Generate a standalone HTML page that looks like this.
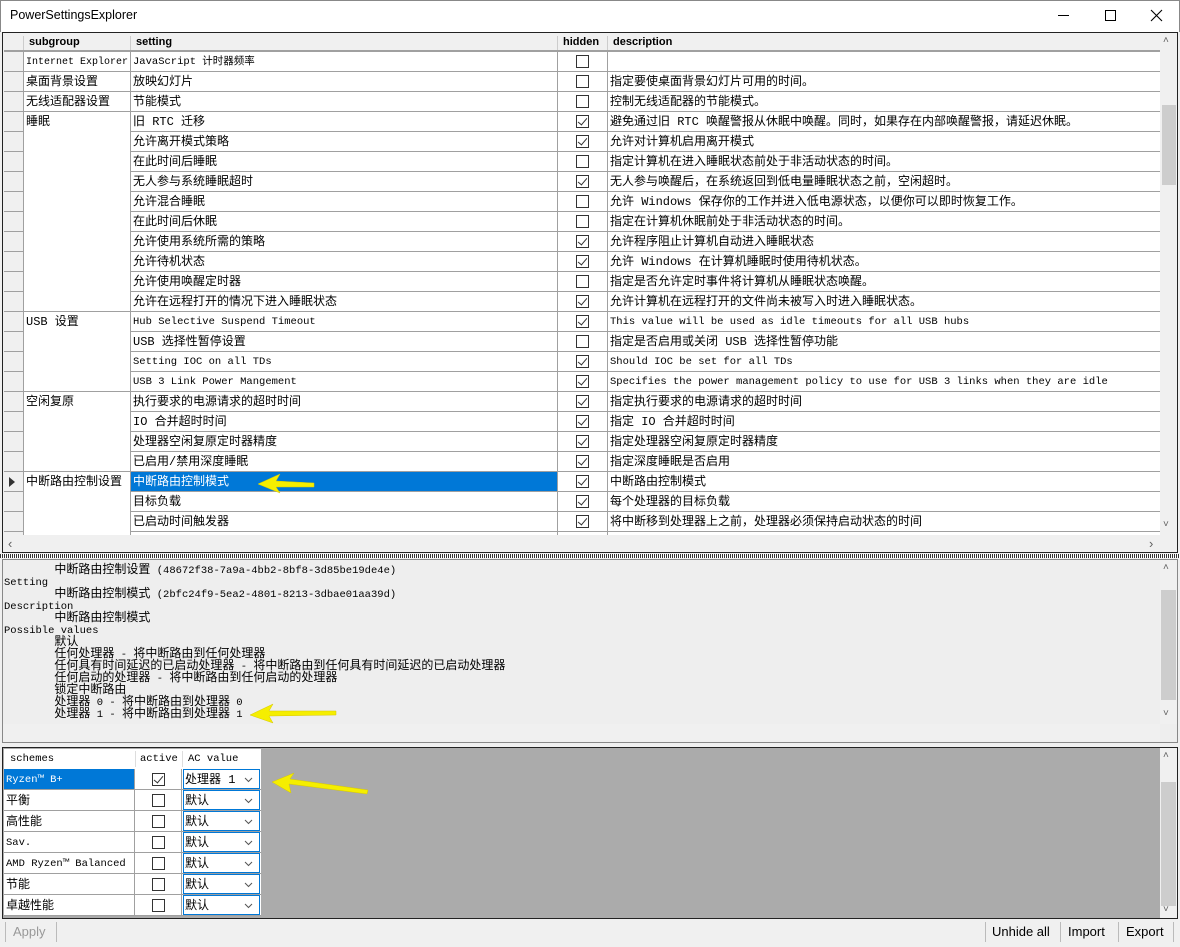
<!DOCTYPE html>
<html><head><meta charset="utf-8">
<style>
*{box-sizing:border-box;margin:0;padding:0}
body{width:1180px;height:947px;background:#f0f0f0;position:relative;overflow:hidden;font-family:"Liberation Sans","Noto Sans CJK SC",sans-serif;font-size:12px;color:#000}
.a{position:absolute}
.c{position:absolute;white-space:nowrap;overflow:hidden;line-height:19px;padding-top:1px;padding-left:2px;font-family:"Liberation Mono","Noto Sans CJK SC",monospace;font-size:12px}
.m{font-size:10.5px}
.m2{font-size:10px}
.cb{position:absolute;width:13px;height:13px;border:1px solid #333;background:#fff}
.ck::after{content:"";position:absolute;left:3px;top:0px;width:4px;height:8px;border:solid #333;border-width:0 1.3px 1.3px 0;transform:rotate(40deg)}
.hd{position:absolute;font-weight:bold;font-size:11px;line-height:19px;padding-left:5px}
pre{font-family:"Liberation Mono","Noto Sans CJK SC",monospace;font-size:10.5px;line-height:12px}
pre b{font-weight:normal;font-size:12px;line-height:0}
</style></head><body>
<div class="a" style="left:0;top:0;width:1180px;height:32px;background:#fff;border:1px solid #888;border-bottom:none"></div>
<div class="a" style="left:10px;top:8px;font-size:12.5px">PowerSettingsExplorer</div>
<div class="a" style="left:1058px;top:15px;width:11px;height:1px;background:#000"></div>
<div class="a" style="left:1105px;top:10px;width:11px;height:11px;border:1px solid #000"></div>
<svg class="a" style="left:1150px;top:9px" width="13" height="13"><path d="M1 1L12 12M12 1L1 12" stroke="#000" stroke-width="1.1"/></svg>
<div class="a" style="left:2px;top:32px;width:1176px;height:521px;border:1px solid #222;background:#f0f0f0"></div>
<div class="a" id="g" style="left:4px;top:33px;width:1156px;height:502px;overflow:hidden;background:#fff"></div>
<div class="a" style="left:1160px;top:33px;width:17px;height:502px;background:#f0f0f0"></div>
<div class="a" style="left:1162px;top:105px;width:14px;height:80px;background:#cdcdcd"></div>
<div class="a" style="left:1163px;top:35px;font-size:10px;color:#606060">&#x2C4;</div>
<div class="a" style="left:1163px;top:519px;font-size:10px;color:#606060">&#x2C5;</div>
<div class="a" style="left:4px;top:535px;width:1156px;height:17px;background:#f0f0f0"></div>
<div class="a" style="left:8px;top:536px;font-size:13px;color:#606060">&lsaquo;</div>
<div class="a" style="left:1149px;top:536px;font-size:13px;color:#606060">&rsaquo;</div>
<div class="a" style="left:0;top:554px;width:1180px;height:4px;background:repeating-linear-gradient(90deg,#333 0 1px,#fff 1px 2px)"></div>
<div class="a" style="left:2px;top:559px;width:1176px;height:184px;border:1px solid #888;background:#eee"></div>
<div class="a" style="left:1160px;top:560px;width:17px;height:164px;background:#f0f0f0"></div>
<div class="a" style="left:1161px;top:590px;width:15px;height:110px;background:#cdcdcd"></div>
<div class="a" style="left:1163px;top:562px;font-size:10px;color:#606060">&#x2C4;</div>
<div class="a" style="left:1163px;top:708px;font-size:10px;color:#606060">&#x2C5;</div>
<div class="a" style="left:3px;top:724px;width:1157px;height:18px;background:#f0f0f0"></div>
<pre class="a" style="left:4px;top:565px">        <b>中断路由控制设置</b> (48672f38-7a9a-4bb2-8bf8-3d85be19de4e)
Setting
        <b>中断路由控制模式</b> (2bfc24f9-5ea2-4801-8213-3dbae01aa39d)
Description
        <b>中断路由控制模式</b>
Possible values
        <b>默认</b>
        <b>任何处理器</b> - <b>将中断路由到任何处理器</b>
        <b>任何具有时间延迟的已启动处理器</b> - <b>将中断路由到任何具有时间延迟的已启动处理器</b>
        <b>任何启动的处理器</b> - <b>将中断路由到任何启动的处理器</b>
        <b>锁定中断路由</b>
        <b>处理器</b> 0 - <b>将中断路由到处理器</b> 0
        <b>处理器</b> 1 - <b>将中断路由到处理器</b> 1</pre>
<div class="a" style="left:2px;top:747px;width:1176px;height:172px;border:1px solid #222;background:#ababab"></div>
<div class="a" style="left:1160px;top:748px;width:17px;height:170px;background:#f0f0f0"></div>
<div class="a" style="left:1161px;top:782px;width:15px;height:124px;background:#cdcdcd"></div>
<div class="a" style="left:1163px;top:750px;font-size:10px;color:#606060">&#x2C4;</div>
<div class="a" style="left:1163px;top:904px;font-size:10px;color:#606060">&#x2C5;</div>
<div id="b"></div>
<div class="a" style="left:5px;top:922px;width:1px;height:20px;background:#bbb"></div>
<div class="a" style="left:13px;top:924px;font-size:13px;color:#999">Apply</div>
<div class="a" style="left:56px;top:922px;width:1px;height:20px;background:#bbb"></div>
<div class="a" style="left:985px;top:922px;width:1px;height:20px;background:#bbb"></div>
<div class="a" style="left:992px;top:924px;font-size:13px">Unhide all</div>
<div class="a" style="left:1060px;top:922px;width:1px;height:20px;background:#bbb"></div>
<div class="a" style="left:1068px;top:924px;font-size:13px">Import</div>
<div class="a" style="left:1118px;top:922px;width:1px;height:20px;background:#bbb"></div>
<div class="a" style="left:1126px;top:924px;font-size:13px">Export</div>
<div class="a" style="left:1173px;top:922px;width:1px;height:20px;background:#bbb"></div>
<svg class="a" style="left:0;top:0" width="1180" height="947">
<g fill="#f5ee00" stroke="#d8c800" stroke-width="0.5">
<path d="M258 484L280 474L276 481L314 483L314 487L276 487L280 493Z"/>
<path d="M250 715L273 704L269 711L336 711L336 715L269 716L273 723Z"/>
<path d="M272 782L294 773L290 779L368 790L367 794L289 784L291 793Z"/>
</g></svg>
<script>
var rows=[
["Internet Explorer","JavaScript 计时器频率",0,"",2,1],
["桌面背景设置","放映幻灯片",0,"指定要使桌面背景幻灯片可用的时间。"],
["无线适配器设置","节能模式",0,"控制无线适配器的节能模式。"],
["睡眠","旧 RTC 迁移",1,"避免通过旧 RTC 唤醒警报从休眠中唤醒。同时，如果存在内部唤醒警报，请延迟休眠。"],
[null,"允许离开模式策略",1,"允许对计算机启用离开模式"],
[null,"在此时间后睡眠",0,"指定计算机在进入睡眠状态前处于非活动状态的时间。"],
[null,"无人参与系统睡眠超时",1,"无人参与唤醒后，在系统返回到低电量睡眠状态之前，空闲超时。"],
[null,"允许混合睡眠",0,"允许 Windows 保存你的工作并进入低电源状态，以便你可以即时恢复工作。"],
[null,"在此时间后休眠",0,"指定在计算机休眠前处于非活动状态的时间。"],
[null,"允许使用系统所需的策略",1,"允许程序阻止计算机自动进入睡眠状态"],
[null,"允许待机状态",1,"允许 Windows 在计算机睡眠时使用待机状态。"],
[null,"允许使用唤醒定时器",0,"指定是否允许定时事件将计算机从睡眠状态唤醒。"],
[null,"允许在远程打开的情况下进入睡眠状态",1,"允许计算机在远程打开的文件尚未被写入时进入睡眠状态。"],
["USB 设置","Hub Selective Suspend Timeout",1,"This value will be used as idle timeouts for all USB hubs",0,1],
[null,"USB 选择性暂停设置",0,"指定是否启用或关闭 USB 选择性暂停功能"],
[null,"Setting IOC on all TDs",1,"Should IOC be set for all TDs",1,1],
[null,"USB 3 Link Power Mangement",1,"Specifies the power management policy to use for USB 3 links when they are idle",1,1],
["空闲复原","执行要求的电源请求的超时时间",1,"指定执行要求的电源请求的超时时间"],
[null,"IO 合并超时时间",1,"指定 IO 合并超时时间"],
[null,"处理器空闲复原定时器精度",1,"指定处理器空闲复原定时器精度"],
[null,"已启用/禁用深度睡眠",1,"指定深度睡眠是否启用"],
["中断路由控制设置","中断路由控制模式",1,"中断路由控制模式"],
[null,"目标负载",1,"每个处理器的目标负载"],
[null,"已启动时间触发器",1,"将中断移到处理器上之前，处理器必须保持启动状态的时间"],
[null,"",1,""]];
var h='';
h+='<div class="a" style="left:0;top:0;width:1156px;height:19px;background:#f0f0f0;border-bottom:2px solid #a0a0a0"></div>';
h+='<div class="hd" style="left:20px;top:0">subgroup</div><div class="hd" style="left:127px;top:0">setting</div><div class="hd" style="left:554px;top:0">hidden</div><div class="hd" style="left:604px;top:0">description</div>';
[20,127,554,604].forEach(function(x){h+='<div class="a" style="left:'+(x-1)+'px;top:3px;width:1px;height:14px;background:#ccc"></div>'});
h+='<div class="a" style="left:0;top:19px;width:20px;height:500px;background:#f0f0f0"></div>';
for(var i=0;i<rows.length;i++){var r=rows[i],y=19+i*20;
 var next=rows[i+1];var cont=next&&next[0]===null;
 h+='<div class="a" style="left:0;top:'+y+'px;width:20px;height:20px;border-right:1px solid #a0a0a0;border-bottom:1px solid #a0a0a0"></div>';
 h+='<div class="a" style="left:20px;top:'+y+'px;width:107px;height:20px;border-right:1px solid #a0a0a0;'+(cont?'':'border-bottom:1px solid #a0a0a0')+'"></div>';
 if(r[0])h+='<div class="c'+(r[4]==2?' m2':r[4]?' m':'')+'" style="left:20px;top:'+y+'px;width:106px">'+r[0]+'</div>';
 var sel=i==21;
 h+='<div class="a" style="left:127px;top:'+y+'px;width:427px;height:20px;border-right:1px solid #a0a0a0;border-bottom:1px solid #a0a0a0;'+(sel?'background:#0078d7;':'')+'"></div>';
 h+='<div class="c'+(r[5]?' m':'')+'" style="left:127px;top:'+y+'px;width:426px;'+(sel?'color:#fff':'')+'">'+r[1]+'</div>';
 h+='<div class="a" style="left:554px;top:'+y+'px;width:50px;height:20px;border-right:1px solid #a0a0a0;border-bottom:1px solid #a0a0a0"></div>';
 h+='<div class="cb'+(r[2]?' ck':'')+'" style="left:572px;top:'+(y+3)+'px"></div>';
 h+='<div class="a" style="left:604px;top:'+y+'px;width:552px;height:20px;border-bottom:1px solid #a0a0a0"></div>';
 h+='<div class="c'+(r[5]?' m':'')+'" style="left:604px;top:'+y+'px;width:550px">'+r[3]+'</div>';
 if(sel)h+='<div class="a" style="left:5px;top:'+(y+5)+'px;width:0;height:0;border-left:6px solid #333;border-top:5px solid transparent;border-bottom:5px solid transparent"></div>';
}
document.getElementById('g').innerHTML=h;
var s=[["Ryzen™ B+",1,"处理器 1",1],["平衡",0,"默认"],["高性能",0,"默认"],["Sav.",0,"默认",1],["AMD Ryzen™ Balanced",0,"默认",1],["节能",0,"默认"],["卓越性能",0,"默认"]];
var b='<div class="a" style="left:4px;top:749px;width:257px;height:20px;background:#fff"></div>';
b+='<div class="c m" style="left:8px;top:749px">schemes</div><div class="c m" style="left:138px;top:749px">active</div><div class="c m" style="left:186px;top:749px">AC value</div>';
b+='<div class="a" style="left:135px;top:751px;width:1px;height:16px;background:#ddd"></div><div class="a" style="left:182px;top:751px;width:1px;height:16px;background:#ddd"></div>';
for(var j=0;j<s.length;j++){var y=769+j*21,q=s[j];
 b+='<div class="a" style="left:4px;top:'+y+'px;width:131px;height:21px;border-right:1px solid #a0a0a0;border-bottom:1px solid #a0a0a0;background:'+(j==0?'#0078d7':'#fff')+'"></div>';
 b+='<div class="c'+(q[3]?' m':'')+'" style="left:4px;top:'+(y+1)+'px;'+(j==0?'color:#fff':'')+'">'+q[0]+'</div>';
 b+='<div class="a" style="left:135px;top:'+y+'px;width:47px;height:21px;border-right:1px solid #a0a0a0;border-bottom:1px solid #a0a0a0;background:#fff"></div>';
 b+='<div class="cb'+(q[1]?' ck':'')+'" style="left:152px;top:'+(y+4)+'px"></div>';
 b+='<div class="a" style="left:182px;top:'+y+'px;width:79px;height:21px;border-bottom:1px solid #a0a0a0;background:#fff"></div>';
 b+='<div class="a" style="left:183px;top:'+y+'px;width:77px;height:20px;border:1px solid #0078d7"></div>';
 b+='<div class="c" style="left:183px;top:'+(y+1)+'px">'+q[2]+'</div>';
 b+='<svg class="a" style="left:244px;top:'+(y+8)+'px" width="9" height="6"><path d="M1 1L4.5 4.5L8 1" stroke="#555" fill="none"/></svg>';
}
document.getElementById('b').innerHTML=b;
</script>
</body></html>
